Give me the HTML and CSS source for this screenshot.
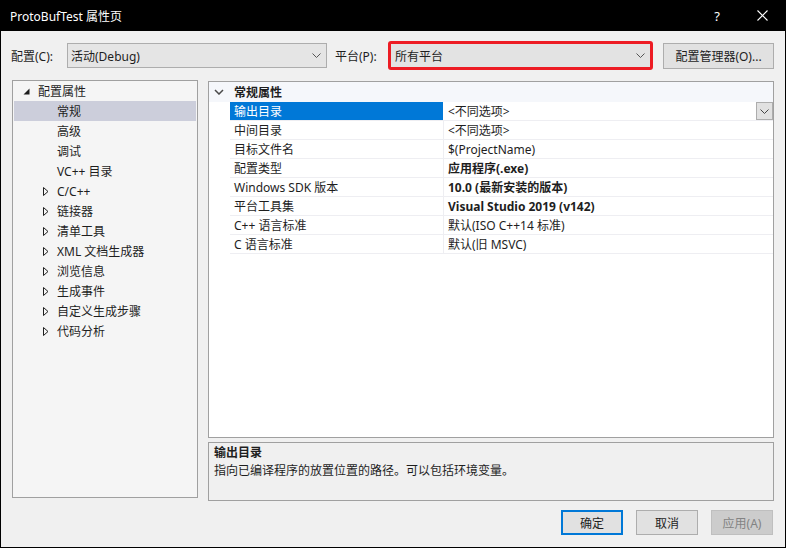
FILE: index.html
```html
<!DOCTYPE html>
<html lang="zh-CN">
<head>
    <meta charset="UTF-8">
    <title>ProtoBufTest 属性页</title>
    <link rel="stylesheet" href="styles.css">
</head>
<body>
    <div class="window">
        <div class="titlebar">
            <span class="title">ProtoBufTest 属性页</span>
            <span class="help">?</span>
            <svg class="close" width="11" height="11" viewBox="0 0 11 11">
                <path d="M0.5 0.5 L10.5 10.5 M10.5 0.5 L0.5 10.5" stroke="#fff" stroke-width="1.1" fill="none"/>
            </svg>
        </div>

        <div class="content">
            <div class="toolbar">
                <label class="lbl lbl-config">配置(C):</label>
                <div class="combo combo-config">
                    <span>活动(Debug)</span>
                    <svg class="chev" width="9" height="5" viewBox="0 0 9 5"><path d="M0.5 0.5 L4.5 4.5 L8.5 0.5" stroke="#555" fill="none"/></svg>
                </div>
                <label class="lbl lbl-platform">平台(P):</label>
                <div class="highlight">
                    <div class="combo combo-platform">
                        <span>所有平台</span>
                        <svg class="chev" width="9" height="5" viewBox="0 0 9 5"><path d="M0.5 0.5 L4.5 4.5 L8.5 0.5" stroke="#555" fill="none"/></svg>
                    </div>
                </div>
                <button class="btn btn-manager">配置管理器(O)...</button>
            </div>

            <div class="main">
                <div class="tree">
                    <div class="node lvl0">
                        <svg class="arrow" width="7" height="7" viewBox="0 0 7 7"><polygon points="6.5,0.5 6.5,6.5 0.5,6.5" fill="#1e1e1e"/></svg>
                        <span>配置属性</span>
                    </div>
                    <div class="node lvl1 leaf selected"><span>常规</span></div>
                    <div class="node lvl1 leaf"><span>高级</span></div>
                    <div class="node lvl1 leaf"><span>调试</span></div>
                    <div class="node lvl1 leaf"><span>VC++ 目录</span></div>
                    <div class="node lvl1">
                        <svg class="arrow" width="6" height="9" viewBox="0 0 6 9"><polygon points="0.5,0.5 5,4.5 0.5,8.5" fill="none" stroke="#1e1e1e"/></svg>
                        <span>C/C++</span>
                    </div>
                    <div class="node lvl1">
                        <svg class="arrow" width="6" height="9" viewBox="0 0 6 9"><polygon points="0.5,0.5 5,4.5 0.5,8.5" fill="none" stroke="#1e1e1e"/></svg>
                        <span>链接器</span>
                    </div>
                    <div class="node lvl1">
                        <svg class="arrow" width="6" height="9" viewBox="0 0 6 9"><polygon points="0.5,0.5 5,4.5 0.5,8.5" fill="none" stroke="#1e1e1e"/></svg>
                        <span>清单工具</span>
                    </div>
                    <div class="node lvl1">
                        <svg class="arrow" width="6" height="9" viewBox="0 0 6 9"><polygon points="0.5,0.5 5,4.5 0.5,8.5" fill="none" stroke="#1e1e1e"/></svg>
                        <span>XML 文档生成器</span>
                    </div>
                    <div class="node lvl1">
                        <svg class="arrow" width="6" height="9" viewBox="0 0 6 9"><polygon points="0.5,0.5 5,4.5 0.5,8.5" fill="none" stroke="#1e1e1e"/></svg>
                        <span>浏览信息</span>
                    </div>
                    <div class="node lvl1">
                        <svg class="arrow" width="6" height="9" viewBox="0 0 6 9"><polygon points="0.5,0.5 5,4.5 0.5,8.5" fill="none" stroke="#1e1e1e"/></svg>
                        <span>生成事件</span>
                    </div>
                    <div class="node lvl1">
                        <svg class="arrow" width="6" height="9" viewBox="0 0 6 9"><polygon points="0.5,0.5 5,4.5 0.5,8.5" fill="none" stroke="#1e1e1e"/></svg>
                        <span>自定义生成步骤</span>
                    </div>
                    <div class="node lvl1">
                        <svg class="arrow" width="6" height="9" viewBox="0 0 6 9"><polygon points="0.5,0.5 5,4.5 0.5,8.5" fill="none" stroke="#1e1e1e"/></svg>
                        <span>代码分析</span>
                    </div>
                </div>

                <div class="right">
                    <div class="grid">
                        <div class="group">
                            <svg class="group-chev" width="10" height="6" viewBox="0 0 10 6"><path d="M1 1 L5 5 L9 1" stroke="#4a4a4a" stroke-width="1.5" fill="none"/></svg>
                            <span>常规属性</span>
                        </div>
                        <div class="prop selected">
                            <div class="name">输出目录</div>
                            <div class="value">
                                <span>&lt;不同选项&gt;</span>
                                <div class="drop"><svg width="9" height="5" viewBox="0 0 9 5"><path d="M0.5 0.5 L4.5 4.5 L8.5 0.5" stroke="#444" fill="none"/></svg></div>
                            </div>
                        </div>
                        <div class="prop"><div class="name">中间目录</div><div class="value">&lt;不同选项&gt;</div></div>
                        <div class="prop"><div class="name">目标文件名</div><div class="value">$(ProjectName)</div></div>
                        <div class="prop"><div class="name">配置类型</div><div class="value bold">应用程序(.exe)</div></div>
                        <div class="prop"><div class="name">Windows SDK 版本</div><div class="value bold">10.0 (最新安装的版本)</div></div>
                        <div class="prop"><div class="name">平台工具集</div><div class="value bold">Visual Studio 2019 (v142)</div></div>
                        <div class="prop"><div class="name">C++ 语言标准</div><div class="value">默认(ISO C++14 标准)</div></div>
                        <div class="prop"><div class="name">C 语言标准</div><div class="value">默认(旧 MSVC)</div></div>
                    </div>
                    <div class="desc">
                        <div class="desc-title">输出目录</div>
                        <div>指向已编译程序的放置位置的路径。可以包括环境变量。</div>
                    </div>
                </div>
            </div>

            <div class="buttons">
                <button class="btn btn-ok">确定</button>
                <button class="btn">取消</button>
                <button class="btn" disabled>应用(A)</button>
            </div>
        </div>
    </div>
</body>
</html>
```

FILE: styles.css
```css
html, body {
    margin: 0;
    padding: 0;
}
body {
    font-family: "Noto Sans", "Noto Sans CJK SC", sans-serif;
    font-size: 12px;
    color: #1e1e1e;
    background: #000;
}
.window {
    width: 786px;
    height: 548px;
    box-sizing: border-box;
    border: 1px solid #000;
    border-top: none;
    background: #f0f0f0;
    display: flex;
    flex-direction: column;
}
.titlebar {
    height: 31px;
    flex: none;
    background: #000;
    color: #fff;
    display: flex;
    align-items: center;
    padding-left: 9px;
}
.title {
    flex: 1;
    font-size: 12px;
}
.help {
    font-size: 13px;
    margin-right: 37px;
}
.close {
    margin-right: 17px;
}
.content {
    padding: 0 11px;
    display: flex;
    flex-direction: column;
}
.toolbar {
    margin-top: 10px;
    height: 29px;
    display: flex;
    align-items: center;
}
.lbl {
    white-space: nowrap;
}
.lbl-config {
    width: 56px;
    margin-left: -1px;
    flex: none;
}
.combo {
    box-sizing: border-box;
    height: 25px;
    background: #e5e5e5;
    border: 1px solid #adadad;
    display: flex;
    align-items: center;
    justify-content: space-between;
    padding: 0 5px 0 3px;
}
.combo-config {
    width: 260px;
    flex: none;
}
.lbl-platform {
    width: 53px;
    margin-left: 8px;
    flex: none;
}
.highlight {
    width: 265px;
    height: 29px;
    box-sizing: border-box;
    border: 3px solid #ed1c24;
    border-radius: 3px;
    flex: none;
    display: flex;
}
.combo-platform {
    flex: 1;
    height: 23px;
    border: none;
    background: #e3e3e3;
    padding: 0 5px 0 4px;
}
.btn {
    box-sizing: border-box;
    font-family: inherit;
    font-size: 12px;
    color: #1e1e1e;
    background: #e1e1e1;
    border: 1px solid #adadad;
    padding: 0;
    height: 25px;
    width: 62px;
}
.btn-manager {
    margin-left: 10px;
    width: 111px;
    height: 26px;
}
.btn:disabled {
    background: #cccccc;
    border-color: #bfbfbf;
    color: #838383;
}
.btn-ok {
    border: 2px solid #0078d7;
}
.main {
    margin-top: 10px;
    height: 421px;
    display: flex;
    gap: 10px;
}
.tree {
    width: 186px;
    height: 418px;
    box-sizing: border-box;
    border: 1px solid #a0a0a0;
    background: #f5f5f5;
    padding: 0 1px;
    flex: none;
}
.node {
    height: 20px;
    display: flex;
    align-items: center;
    white-space: nowrap;
}
.node .arrow {
    flex: none;
}
.lvl0 {
    padding-left: 9px;
}
.lvl0 .arrow {
    width: 7px;
    margin-right: 8px;
    margin-top: 1px;
}
.lvl1 {
    padding-left: 29px;
}
.lvl1 .arrow {
    margin-right: 8px;
}
.lvl1.leaf {
    padding-left: 43px;
}
.node.selected {
    background: #cccedb;
}
.right {
    width: 566px;
    margin-top: 1px;
    display: flex;
    flex-direction: column;
    gap: 4px;
}
.grid {
    height: 357px;
    box-sizing: border-box;
    border: 1px solid #a0a0a0;
    background: #fff;
}
.group {
    height: 20px;
    background: #f5f7fb;
    display: flex;
    align-items: center;
    font-weight: bold;
}
.group-chev {
    margin-left: 5px;
    margin-right: 10px;
}
.prop {
    height: 19px;
    box-sizing: border-box;
    border-bottom: 1px solid #eeeef2;
    margin-left: 21px;
    display: flex;
}
.prop .name {
    width: 214px;
    box-sizing: border-box;
    padding: 1px 0 0 4px;
    line-height: 17px;
    border-right: 1px solid #eeeef2;
    white-space: nowrap;
}
.prop .value {
    flex: 1;
    padding: 1px 0 0 4px;
    line-height: 17px;
    display: flex;
    justify-content: space-between;
    white-space: nowrap;
}
.prop.selected .name {
    background: #0078d7;
    color: #fff;
    border-right-color: #fff;
}
.prop.selected .value {
    padding-top: 0;
    line-height: 18px;
}
.prop.selected .value span {
    padding-top: 1px;
}
.value.bold {
    font-weight: bold;
}
.drop {
    width: 17px;
    height: 18px;
    box-sizing: border-box;
    background: #e1e1e1;
    border: 1px solid #adadad;
    display: flex;
    align-items: center;
    justify-content: center;
}
.desc {
    height: 59px;
    box-sizing: border-box;
    border: 1px solid #a0a0a0;
    background: #f0f0f0;
    padding: 1px 5px 0;
    line-height: 18px;
}
.desc-title {
    font-weight: bold;
}
.buttons {
    margin-top: 9px;
    display: flex;
    justify-content: flex-end;
    gap: 13px;
    padding-right: 1px;
}
```
